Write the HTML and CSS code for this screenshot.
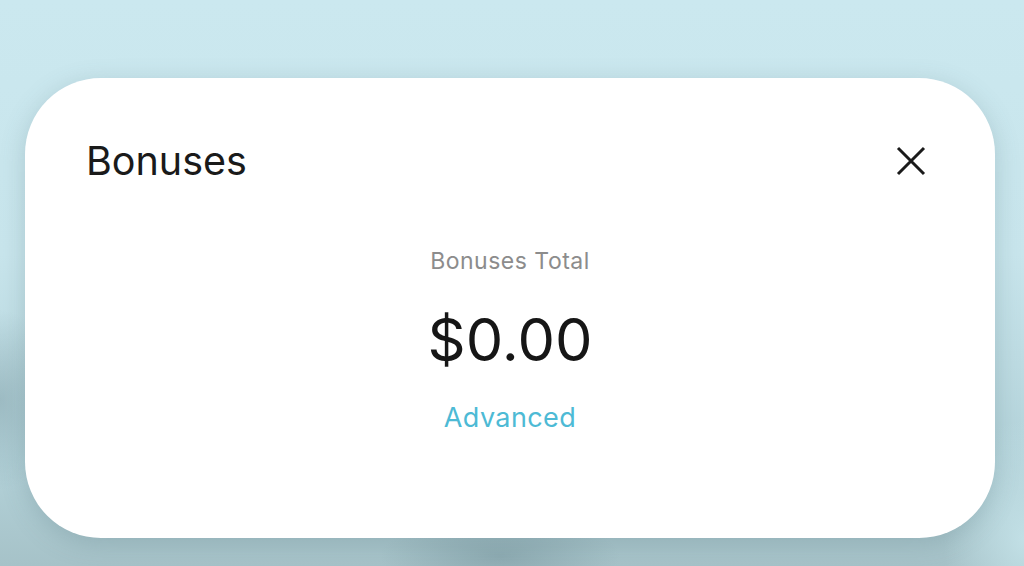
FILE: index.html
```html
<!DOCTYPE html>
<html>
<head>
<meta charset="utf-8">
<link rel="stylesheet" href="styles.css">
</head>
<body>
<div class="backdrop">
  <div class="card">
    <div class="header">
      <h1 class="title">Bonuses</h1>
      <button class="close" aria-label="Close">
        <svg width="30" height="30" viewBox="0 0 30 30"><path d="M2 2 L28 28 M28 2 L2 28" stroke="#1a1a1a" stroke-width="3" stroke-linecap="butt" fill="none"/></svg>
      </button>
    </div>
    <div class="body">
      <div class="label">Bonuses Total</div>
      <div class="amount">$0.00</div>
      <a class="link" href="#">Advanced</a>
    </div>
  </div>
</div>
</body>
</html>
```
FILE: styles.css
```css
html, body {
  margin: 0;
  padding: 0;
  width: 1024px;
  height: 566px;
  overflow: hidden;
}
body {
  font-family: Inter, "Noto Sans", sans-serif;
}
.backdrop {
  width: 1024px;
  height: 566px;
  box-sizing: border-box;
  padding: 78px 29px 0 25px;
  background:
    radial-gradient(ellipse 120px 40px at 500px 556px, rgba(120,150,158,0.55), rgba(120,150,158,0) 100%),
    radial-gradient(ellipse 60px 90px at 0px 400px, rgba(130,160,168,0.5), rgba(130,160,168,0) 100%),
    radial-gradient(ellipse 80px 120px at 1024px 540px, rgba(200,230,236,0.8), rgba(200,230,236,0) 100%),
    linear-gradient(180deg, #cbe8ef 0%, #c8e5ec 45%, #b4d3da 80%, #a6c2c8 100%);
}
.card {
  width: 970px;
  height: 460px;
  background: #fff;
  border-radius: 76px;
  box-sizing: border-box;
  padding: 0 61px;
  box-shadow: 0 6px 24px rgba(80,110,118,0.25);
}
.header {
  display: flex;
  justify-content: space-between;
  align-items: center;
  padding: 58px 8px 0 0;
  height: 50px;
}
.title {
  margin: 0;
  font-size: 39.5px;
  font-weight: 400;
  color: #1a1a1a;
  line-height: 50px;
}
.close {
  border: none;
  background: none;
  padding: 0;
  width: 30px;
  height: 30px;
  display: flex;
}
.body {
  display: flex;
  flex-direction: column;
  align-items: center;
  padding-top: 60px;
}
.label {
  font-size: 23px;
  letter-spacing: 0.5px;
  color: #8c8c8c;
  line-height: 30px;
}
.amount {
  font-size: 59.5px;
  color: #161616;
  line-height: 80px;
  margin-top: 23px;
}
.link {
  font-size: 27px;
  letter-spacing: 0.4px;
  color: #4dbad5;
  text-decoration: none;
  line-height: 34px;
  margin-top: 22px;
}
```
